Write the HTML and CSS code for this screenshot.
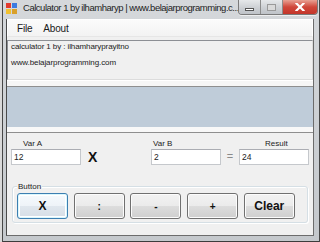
FILE: index.html
```html
<!DOCTYPE html>
<html>
<head>
<meta charset="utf-8">
<link rel="stylesheet" href="styles.css">
</head>
<body>
<div class="window">
  <div class="titlebar">
    <svg class="app-icon" width="11" height="11" viewBox="0 0 11 11">
      <rect x="0" y="0" width="5" height="5" fill="#e23b2e"/>
      <rect x="6" y="0" width="5" height="5" fill="#3b7be2"/>
      <rect x="0" y="6" width="5" height="5" fill="#f2c12e"/>
      <rect x="6" y="6" width="5" height="5" fill="#d9a02a"/>
    </svg>
    <span class="title">Calculator 1 by ilhamharyp | www.belajarprogramming.c...</span>
    <div class="controls">
      <div class="ctl ctl-min"><span class="min-bar"></span></div>
      <div class="ctl ctl-max"><span class="max-box"></span></div>
      <div class="ctl ctl-close">
        <svg width="10" height="8" viewBox="0 0 10 8"><path d="M1.5 0.5 L8.5 7.5 M8.5 0.5 L1.5 7.5" stroke="#fff" stroke-width="2.2" stroke-linecap="square"/></svg>
      </div>
    </div>
  </div>
  <div class="client">
    <div class="menubar">
      <span class="menu-item">File</span>
      <span class="menu-item">About</span>
    </div>
    <div class="infobox">
      <div class="info-line">calculator 1 by : ilhamharyprayitno</div>
      <div class="info-line second">www.belajarprogramming.com</div>
    </div>
    <div class="strip-top"></div>
    <div class="display"></div>
    <div class="strip-bottom"></div>
    <div class="panel">
      <div class="fields">
        <span class="lbl lbl-a">Var A</span>
        <span></span>
        <span class="lbl lbl-b">Var B</span>
        <span></span>
        <span class="lbl lbl-r">Result</span>
        <div class="input">12</div>
        <div class="op">X</div>
        <div class="input">2</div>
        <div class="eq">=</div>
        <div class="input">24</div>
      </div>
      <div class="group">
        <span class="legend">Button</span>
        <div class="buttons">
          <div class="btn focused">X</div>
          <div class="btn sym">:</div>
          <div class="btn sym">-</div>
          <div class="btn sym">+</div>
          <div class="btn">Clear</div>
        </div>
      </div>
    </div>
  </div>
</div>
</body>
</html>
```
FILE: styles.css
```css
* { box-sizing: border-box; }
html, body { margin: 0; padding: 0; }
body {
  width: 320px;
  height: 242px;
  overflow: hidden;
  background: #cfcfcf;
  font-family: "Liberation Sans", Arial, sans-serif;
}
.window {
  width: 320px;
  height: 242px;
  background: linear-gradient(#d5d8db, #c4c8cc);
  border-left: 2px solid #d9d9d9;
  box-shadow: inset 1px 0 0 #464646, inset -1px 0 0 #464646, inset 0 -1px 0 #3c3c3c;
  display: flex;
  flex-direction: column;
  padding: 0 6px 6px 4px;
}
.titlebar {
  flex: none;
  height: 19px;
  display: flex;
  align-items: flex-start;
  position: relative;
}
.app-icon {
  margin: 3px 0 0 0;
  flex: none;
}
.title {
  margin: 2px 0 0 6px;
  font-size: 9.5px;
  letter-spacing: -0.48px;
  color: #1e1e1e;
  white-space: nowrap;
  line-height: 12px;
}
.controls {
  position: absolute;
  right: -4px;
  top: 0;
  display: flex;
  height: 15px;
  border: 1px solid #7a7a7a;
  border-top: none;
  border-radius: 0 0 4px 4px;
  overflow: hidden;
  box-shadow: 0 1px 0 rgba(255,255,255,0.6);
}
.ctl {
  flex: none;
  height: 14px;
  display: flex;
  align-items: center;
  justify-content: center;
}
.ctl-min, .ctl-max {
  width: 22px;
  background: linear-gradient(#e6e8ea, #cdd0d4 55%, #bfc3c8);
  border-right: 1px solid #8c8c8c;
}
.min-bar {
  width: 9px;
  height: 3px;
  background: #fff;
  border: 1px solid #555;
  margin-top: 4px;
}
.max-box {
  width: 9px;
  height: 7px;
  border: 1px solid #9a9a9a;
  background: #dadada;
}
.ctl-close {
  width: 34px;
  background: linear-gradient(#e8a193, #d0473a 50%, #c3362a);
}
.client {
  flex: 1;
  display: flex;
  flex-direction: column;
  background: #f0f0f0;
  border: 1px solid #6c6c6c;
  border-top: none;
  border-left-color: #4a4a4a;
}
.menubar {
  flex: none;
  height: 18px;
  display: flex;
  align-items: center;
  padding-left: 9px;
  gap: 11px;
  background: linear-gradient(#fbfbfb, #f3f3f3);
  border: 1px solid #fff;
  border-bottom-color: #e6e6e6;
  font-size: 10px;
  color: #1a1a1a;
}
.menu-item { letter-spacing: -0.2px; }
.infobox {
  flex: none;
  margin-top: 3px;
  height: 40px;
  border: 1px solid #8c8f94;
  border-right-color: #dcdcdc;
  border-bottom-color: #dcdcdc;
  background: #f0f0f0;
  padding: 1px 0 0 3px;
  font-size: 8px;
  color: #222;
}
.info-line { line-height: 9px; letter-spacing: -0.1px; }
.info-line.second { margin-top: 7px; }
.strip-top {
  flex: none;
  height: 7px;
  background: #f6f6f6;
  border-top: 1px solid #fff;
  border-bottom: 1px solid #8f8f8f;
}
.display {
  flex: none;
  height: 40px;
  background: #bfccd9;
}
.strip-bottom {
  flex: none;
  height: 6px;
  background: #f8f8f8;
  border-bottom: 1px solid #8f8f8f;
}
.panel {
  flex: 1;
  display: flex;
  flex-direction: column;
  padding: 6px 0 0 4px;
}
.fields {
  display: grid;
  grid-template-columns: 70px 70px 70px 18px 70px;
  grid-template-rows: 10px 16px;
  row-gap: 0;
  font-size: 8px;
  color: #222;
}
.lbl { line-height: 9px; }
.lbl-a { padding-left: 12px; }
.lbl-b { padding-left: 2px; }
.lbl-r { padding-left: 26px; }
.input {
  height: 16px;
  width: 70px;
  background: #fff;
  border: 1px solid #c5c8cc;
  border-top-color: #abadb3;
  padding: 3px 0 0 2px;
  line-height: 9px;
  font-size: 8.5px;
}
.op {
  font-weight: bold;
  font-size: 14px;
  line-height: 17px;
  padding-left: 7px;
  color: #111;
}
.eq {
  text-align: center;
  font-size: 11px;
  line-height: 15px;
  color: #8a8a8a;
}
.group {
  position: relative;
  margin: 21px 0 0 1px;
  width: 296px;
  height: 37px;
  border: 1px solid #d5dfe5;
  border-radius: 3px;
  box-shadow: inset 1px 1px 0 #fff, 1px 1px 0 #fff;
  padding: 6px 0 0 4px;
}
.legend {
  position: absolute;
  left: 4px;
  top: -5px;
  padding: 0 1px;
  background: #f0f0f0;
  font-size: 8px;
  line-height: 9px;
  color: #222;
}
.buttons {
  display: flex;
  gap: 5.7px;
}
.btn {
  width: 51px;
  height: 26px;
  border: 1px solid #707070;
  border-radius: 3px;
  background: linear-gradient(#f2f2f2, #ebebeb 50%, #dddddd 50%, #cfcfcf);
  box-shadow: inset 0 0 0 1px #fcfcfc;
  display: flex;
  align-items: center;
  justify-content: center;
  font-weight: bold;
  font-size: 12px;
  color: #111;
}
.btn.sym { font-size: 10px; }
.btn.focused {
  border-color: #3c7fb1;
  box-shadow: inset 0 0 0 1px #48d7fb33, inset 0 0 0 2px #fff;
  background: linear-gradient(#f6fafd, #eef3f8 50%, #e0e7ee 50%, #d6dee6);
}
```
